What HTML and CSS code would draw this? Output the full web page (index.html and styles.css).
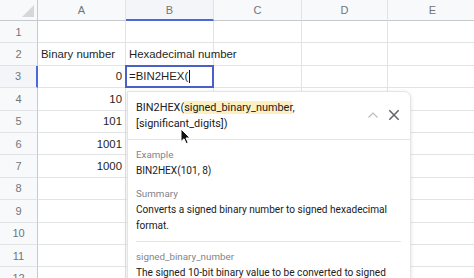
FILE: index.html
```html
<!DOCTYPE html>
<html>
<head>
<meta charset="utf-8">
<link rel="stylesheet" href="styles.css">
</head>
<body>
<div class="sheet">
  <div class="grid">
    <div class="hd corner"><span class="tri"></span></div>
    <div class="hd col">A</div>
    <div class="hd col sel-col">B</div>
    <div class="hd col">C</div>
    <div class="hd col">D</div>
    <div class="hd col">E</div>

    <div class="hd row">1</div><div class="c"></div><div class="c"></div><div class="c"></div><div class="c"></div><div class="c"></div>
    <div class="hd row">2</div><div class="c">Binary number</div><div class="c">Hexadecimal number</div><div class="c"></div><div class="c"></div><div class="c"></div>
    <div class="hd row sel-row">3</div><div class="c num">0</div><div class="c active">=BIN2HEX(<span class="caret"></span></div><div class="c"></div><div class="c"></div><div class="c"></div>
    <div class="hd row">4</div><div class="c num">10</div><div class="c"></div><div class="c"></div><div class="c"></div><div class="c"></div>
    <div class="hd row">5</div><div class="c num">101</div><div class="c"></div><div class="c"></div><div class="c"></div><div class="c"></div>
    <div class="hd row">6</div><div class="c num">1001</div><div class="c"></div><div class="c"></div><div class="c"></div><div class="c"></div>
    <div class="hd row">7</div><div class="c num">1000</div><div class="c"></div><div class="c"></div><div class="c"></div><div class="c"></div>
    <div class="hd row">8</div><div class="c"></div><div class="c"></div><div class="c"></div><div class="c"></div><div class="c"></div>
    <div class="hd row">9</div><div class="c"></div><div class="c"></div><div class="c"></div><div class="c"></div><div class="c"></div>
    <div class="hd row">10</div><div class="c"></div><div class="c"></div><div class="c"></div><div class="c"></div><div class="c"></div>
    <div class="hd row">11</div><div class="c"></div><div class="c"></div><div class="c"></div><div class="c"></div><div class="c"></div>
    <div class="hd row">12</div><div class="c"></div><div class="c"></div><div class="c"></div><div class="c"></div><div class="c"></div>
  </div>

  <div class="popup">
    <div class="pop-head">
      <div class="sig">BIN2HEX(<span class="hl">signed_binary_number</span>,<br>[significant_digits])</div>
      <div class="pop-icons">
        <svg class="chev" width="12" height="8" viewBox="0 0 12 8"><path d="M1.5 6.5 L6 2 L10.5 6.5" fill="none" stroke="#b9bbbe" stroke-width="1.2"/></svg>
        <svg class="close" width="12" height="12" viewBox="0 0 12 12"><path d="M1.3 1.3 L10.7 10.7 M10.7 1.3 L1.3 10.7" fill="none" stroke="#5f6368" stroke-width="1.5"/></svg>
      </div>
    </div>
    <div class="pop-body">
      <div class="sec">
        <div class="lbl">Example</div>
        <div class="txt">BIN2HEX(101, 8)</div>
        <div class="lbl gap">Summary</div>
        <div class="txt">Converts a signed binary number to signed hexadecimal format.</div>
      </div>
      <div class="sec divided">
        <div class="lbl">signed_binary_number</div>
        <div class="txt">The signed 10-bit binary value to be converted to signed hexadecimal.</div>
      </div>
    </div>
  </div>

  <svg class="pointer" width="12" height="17" viewBox="0 0 12 17"><path d="M1 1 L1 13.5 L4 10.8 L6.2 15.6 L8.2 14.7 L6 10 L10 10 Z" fill="#111" stroke="#fff" stroke-width="1"/></svg>
</div>
</body>
</html>
```

FILE: styles.css
```css
html, body {
  margin: 0;
  padding: 0;
  background: #fff;
}
.sheet {
  position: relative;
  width: 474px;
  height: 278px;
  overflow: hidden;
  font-family: "Liberation Sans", Arial, sans-serif;
}
.grid {
  display: grid;
  grid-template-columns: 38px 88px 88px 88px 86px 90px;
  grid-template-rows: 21px repeat(12, 22.4px);
}
.hd {
  background: #f8f9fa;
  color: #70757a;
  font-size: 11px;
  display: flex;
  align-items: center;
  justify-content: center;
  box-sizing: border-box;
  border-right: 1px solid #e1e3e6;
  border-bottom: 1px solid #e1e3e6;
}
.corner {
  position: relative;
  border-right: 1px solid #c7c9cc;
  border-bottom: 1px solid #c7c9cc;
}
.tri {
  position: absolute;
  right: 3px;
  bottom: 3px;
  width: 0;
  height: 0;
  border-left: 12px solid transparent;
  border-bottom: 12px solid #d5d7da;
}
.col {
  border-bottom: 1px solid #c7c9cc;
}
.sel-col {
  border-bottom: 2px solid #4a6bd6;
  background: #f4f5f8;
}
.row {
  border-right: 1px solid #c7c9cc;
}
.sel-row {
  border-right: 2px solid #4a6bd6;
  background: #f4f5f8;
}
.c {
  box-sizing: border-box;
  border-right: 1px solid #e2e3e5;
  border-bottom: 1px solid #e2e3e5;
  font-size: 11.4px;
  color: #1f1f1f;
  display: flex;
  align-items: center;
  padding: 0 3px;
  white-space: nowrap;
}
.num {
  justify-content: flex-end;
}
.active {
  border: 2px solid #4a5fc7;
  margin: -1px 0 0 -1px;
  padding-left: 2px;
  position: relative;
}
.caret {
  display: inline-block;
  width: 1px;
  height: 13px;
  background: #111;
  margin-left: 1px;
}
.popup {
  position: absolute;
  left: 127px;
  top: 91px;
  width: 282px;
  height: 200px;
  background: #fff;
  border: 1px solid #e4e5e7;
  border-radius: 0 7px 0 0;
  box-shadow: 0 1px 4px rgba(0,0,0,0.12);
  color: #202124;
  font-family: Roboto, "Liberation Sans", sans-serif;
}
.pop-head {
  display: flex;
  justify-content: space-between;
  align-items: flex-start;
  padding: 8px 8px 6px 8px;
  border-bottom: 1px solid #e4e5e7;
  line-height: 16.4px;
  font-size: 10.9px;
}
.hl {
  background: #fcefc2;
}
.pop-icons {
  display: flex;
  align-items: center;
  gap: 9px;
  padding-top: 9px;
  padding-right: 2px;
}
.pop-body {
  padding: 0 8px;
}
.sec {
  padding-top: 7px;
  padding-bottom: 6px;
  line-height: 16.4px;
}
.divided {
  border-top: 1px solid #e4e5e7;
  margin-right: 1px;
}
.lbl {
  color: #80868b;
  font-size: 9.8px;
}
.lbl.gap {
  margin-top: 6px;
}
.txt {
  font-size: 10.1px;
  color: #202124;
}
.pointer {
  position: absolute;
  left: 180px;
  top: 128px;
}
```
